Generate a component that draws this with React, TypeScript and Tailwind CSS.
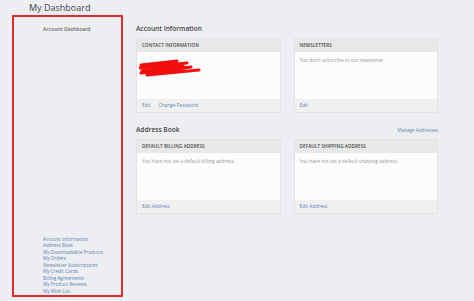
const font = { fontFamily: '"Open Sans", "Liberation Sans", sans-serif' };

const sideLinks = [
  'Account Information',
  'Address Book',
  'My Downloadable Products',
  'My Orders',
  'Newsletter Subscriptions',
  'My Credit Cards',
  'Billing Agreements',
  'My Product Reviews',
  'My Wish List',
];

function Scribble() {
  return (
    <svg width="64" height="20" viewBox="0 0 64 20" className="block">
      <path
        d="M2 7 L38 3 M1 10 L48 5 M3 13 L44 8 M2 15 L52 9 M8 17 L60 12 M20 15 L46 13"
        stroke="#f20d0d"
        strokeWidth="3"
        strokeLinecap="round"
        strokeLinejoin="round"
        fill="none"
      />
    </svg>
  );
}

function Box({
  title,
  children,
  links,
}: {
  title: string;
  children?: React.ReactNode;
  links: string[];
}) {
  return (
    <div className="w-[145px] h-[75px] flex flex-col border border-[#e2e3e5] bg-[#f0f0f1]">
      <div className="h-[13px] flex items-center px-[5px] bg-[#e8e8e9] text-[4.6px] font-semibold text-[#444] tracking-[0.1px]">
        {title}
      </div>
      <div className="h-[47px] bg-[#fcfcfc] px-[5px] pt-[5px] text-[4.8px] text-[#999]">{children}</div>
      <div className="flex-1 flex items-center gap-[8px] px-[5px] text-[4.8px] text-[#5b84b3]">
        {links.map((l) => (
          <span key={l}>{l}</span>
        ))}
      </div>
    </div>
  );
}

export default function App() {
  return (
    <div className="w-[474px] h-[301px] bg-[#edeef1] overflow-hidden" style={font}>
      <div className="h-[15px] pl-[29px] pt-[2px] text-[9px] leading-[11px] text-[#444]">My Dashboard</div>
      <div className="flex">
        <div className="ml-[12px] w-[111px] h-[282px] border-2 border-[#e2292b] flex flex-col justify-between pl-[29px] pt-[9px] pb-[1px]">
          <div className="text-[5px] font-semibold text-[#666]">Account Dashboard</div>
          <div className="flex flex-col text-[4.7px] leading-[6.5px] text-[#5b84b3]">
            {sideLinks.map((l) => (
              <span key={l}>{l}</span>
            ))}
          </div>
        </div>
        <div className="ml-[13px] w-[302px] flex flex-col">
          <div className="mt-[9px] h-[14px] text-[6.6px] font-semibold text-[#444] leading-[10px]">
            Account Information
          </div>
          <div className="flex gap-[13px]">
            <Box title="CONTACT INFORMATION" links={['Edit', 'Change Password']}>
              <div className="-ml-[3px] mt-[1px]">
                <Scribble />
              </div>
            </Box>
            <Box title="NEWSLETTERS" links={['Edit']}>
              You don't subscribe to our newsletter.
            </Box>
          </div>
          <div className="mt-[12px] h-[14px] flex justify-between leading-[10px]">
            <span className="text-[6.6px] font-semibold text-[#444]">Address Book</span>
            <span className="text-[4.6px] text-[#5b84b3]">Manage Addresses</span>
          </div>
          <div className="flex gap-[13px]">
            <Box title="DEFAULT BILLING ADDRESS" links={['Edit Address']}>
              You have not set a default billing address.
            </Box>
            <Box title="DEFAULT SHIPPING ADDRESS" links={['Edit Address']}>
              You have not set a default shipping address.
            </Box>
          </div>
        </div>
      </div>
    </div>
  );
}
